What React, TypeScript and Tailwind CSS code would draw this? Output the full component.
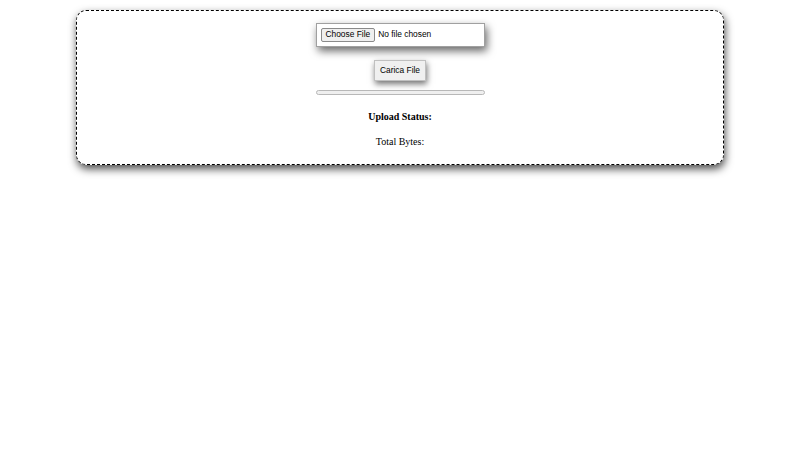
import { useState } from 'react';

// Upload panel: file picker, upload button, progress bar and status lines
export const UploadPanel = () => {
  const [fileName] = useState<string | null>(null);
  const [progress] = useState(0);

  return (
    <div className="bg-white min-h-[450px] pt-[10px]">
      <div className="mx-auto w-[648px] h-[155px] border-[1.5px] border-dashed border-black rounded-[10px] shadow-[1px_4px_8px_rgba(0,0,0,0.7)] flex flex-col items-center pt-[11.5px]">
        <div className="w-[169px] h-[24px] border border-[#a0a0a0] bg-white flex items-center pl-[4px] gap-[3px] shadow-[2px_4px_8px_rgba(0,0,0,0.6)] font-['Liberation_Sans',Arial,sans-serif] text-[8.4px] text-black">
          <span className="h-[14px] px-[4px] flex items-center bg-[#efefef] border border-[#8a8a8a] rounded-[2px] leading-none">
            Choose File
          </span>
          <span className="leading-none">{fileName ?? 'No file chosen'}</span>
        </div>

        <button className="mt-[13px] h-[21px] w-[52px] bg-[#f0f0f0] border border-[#c0c0c0] shadow-[1px_3px_6px_rgba(0,0,0,0.55)] font-['Liberation_Sans',Arial,sans-serif] text-[8.4px] text-black leading-none">
          Carica File
        </button>

        <div className="mt-[9px] w-[169px] h-[5px] rounded-full border border-[#b8b8b8] bg-[#efefef] overflow-hidden">
          <div className="h-full bg-[#1a73e8]" style={{ width: `${progress}%` }} />
        </div>

        <h3 className="mt-[16px] font-['Liberation_Serif','Times_New_Roman',serif] font-bold text-[10px] leading-[12px] text-black">
          Upload Status:
        </h3>
        <p className="mt-[13px] font-['Liberation_Serif','Times_New_Roman',serif] text-[10px] leading-[12px] text-black">
          Total Bytes:
        </p>
      </div>
    </div>
  );
};

export default UploadPanel;
